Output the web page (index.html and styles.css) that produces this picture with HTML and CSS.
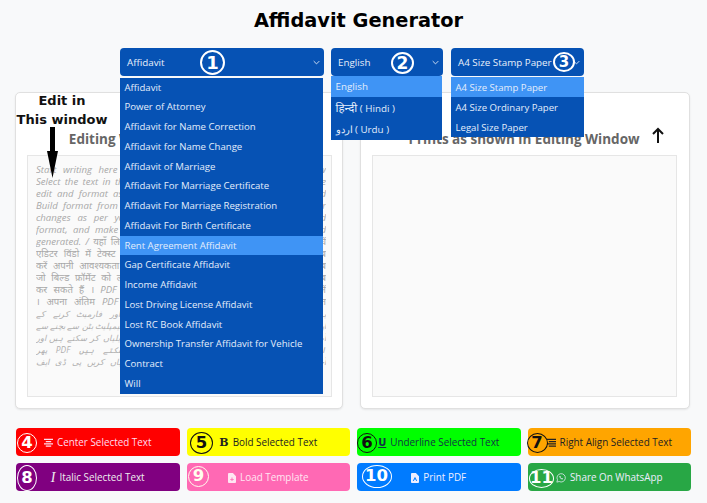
FILE: index.html
```html
<!DOCTYPE html>
<html lang="en">
<head>
<meta charset="utf-8">
<title>Affidavit Generator</title>
<link rel="stylesheet" href="styles.css">
</head>
<body>
<div class="page">
  <h1 class="title">Affidavit Generator</h1>
  <div class="selects">
    <div class="select s1">
      <div class="select-head"><span>Affidavit</span><svg class="chev" viewBox="0 0 10 6"><path d="M1 1l4 4 4-4"/></svg></div>
      <span class="num n1">1</span>
      <ul class="menu">
        <li>Affidavit</li><li>Power of Attorney</li><li>Affidavit for Name Correction</li><li>Affidavit for Name Change</li><li>Affidavit of Marriage</li><li>Affidavit For Marriage Certificate</li><li>Affidavit For Marriage Registration</li><li>Affidavit For Birth Certificate</li><li class="on">Rent Agreement Affidavit</li><li>Gap Certificate Affidavit</li><li>Income Affidavit</li><li>Lost Driving License Affidavit</li><li>Lost RC Book Affidavit</li><li>Ownership Transfer Affidavit for Vehicle</li><li>Contract</li><li>Will</li>
      </ul>
    </div>
    <div class="select s2">
      <div class="select-head"><span>English</span><svg class="chev" viewBox="0 0 10 6"><path d="M1 1l4 4 4-4"/></svg></div>
      <span class="num n2">2</span>
      <ul class="menu tall">
        <li class="on">English</li><li><span class="hi">हिन्दी</span> ( Hindi )</li><li>اردو ( Urdu )</li>
      </ul>
    </div>
    <div class="select s3">
      <div class="select-head"><span>A4 Size Stamp Paper</span><svg class="chev" viewBox="0 0 10 6"><path d="M1 1l4 4 4-4"/></svg></div>
      <span class="num n3">3</span>
      <ul class="menu">
        <li class="on">A4 Size Stamp Paper</li><li>A4 Size Ordinary Paper</li><li>Legal Size Paper</li>
      </ul>
    </div>
  </div>
  <div class="cards">
    <section class="card left">
      <h2 class="card-title">Editing Window to Edit Your Text</h2>
      <div class="box editor">
        <p class="line">Start writing here and format your own legal document now</p>
        <p class="line">Select the text in this editing window then you can easily change</p>
        <p class="line">edit and format as you like using the buttons given below and</p>
        <p class="line">Build format from the available templates and then make your</p>
        <p class="line">changes as per your need so that it looks like the required</p>
        <p class="line">format, and make the final PDF document that will be printed</p>
        <p class="line">generated. / यहाँ लिखना शुरू करें और विंडो में अपना टेक्स्ट बनाएं और जांचें</p>
        <p class="line">एडिटर विंडो में टेक्स्ट चुनें और फ़ॉर्मेट बटन से संपादित करें और सहेजें तब</p>
        <p class="line">करें अपनी आवश्यकता अनुसार बदलाव फ़ॉर्मेट और टेम्पलेट को लोड करें तब</p>
        <p class="line">जो बिल्ड फ़ॉर्मेट को लोड करके अपने अनुसार बदलाव जल्दी से कर लें अब</p>
        <p class="line">कर सकते हैं । PDF जेनरेट करें और प्रिंट करके दस्तावेज़ सहेजें और भेजें</p>
        <p class="line">। अपना अंतिम PDF जेनरेट करें और व्हाट्सएप पर साझा करें अब तुरंत</p>
        <p class="line urdu" dir="rtl">یہاں لکھنا شروع کریں متن منتخب کریں ترمیم اور فارمیٹ کرنے کے</p>
        <p class="line urdu" dir="rtl">اپنی مرضی کے مطابق فارمیٹ بنائیں اور بٹن استعمال کریں ٹیمپلیٹ بٹن سے بچنے سے</p>
        <p class="line urdu" dir="rtl">آپ اپنی ضرورت کے مطابق دستاویز میں ہر طرح کی تبدیلیاں کر سکتے ہیں اور</p>
        <p class="line urdu" dir="rtl">اپنی دستاویز میں مطلوبہ تبدیلیاں کر سکتے ہیں PDF پھر</p>
        <p class="line urdu" dir="rtl">آخر میں اپنی حتمی دستاویز محفوظ کریں PDF تبدیلیاں کریں پی ڈی ایف</p>
      </div>
    </section>
    <section class="card right">
      <h2 class="card-title">Prints as shown in Editing Window</h2>
      <div class="box"></div>
    </section>
    <div class="note">Edit in<br>This window</div>
    <svg class="arrow-down" viewBox="0 0 11 51"><path d="M3 0h5v24h3L5.500 51 0 24h3z"/></svg>
    <svg class="arrow-up" viewBox="0 0 12 16"><path d="M6 16V2M1 7l5-5 5 5"/></svg>
  </div>
  <div class="buttons">
    <button class="btn red"><span class="num small bn4">4</span><svg class="ic" viewBox="0 0 10 10"><path d="M0 1.500h10M2 4h6M0 6.500h10M2 9h6"/></svg>Center Selected Text</button>
    <button class="btn yellow"><span class="num small dark bn5">5</span><b class="bi">B</b>Bold Selected Text</button>
    <button class="btn green"><span class="num small dark bn6">6</span><span class="ui">U</span>Underline Selected Text</button>
    <button class="btn orange"><span class="num small dark bn7">7</span><svg class="ic" viewBox="0 0 10 10"><path d="M0 1.500h10M2 4h8M0 6.500h10M2 9h8"/></svg>Right Align Selected Text</button>
    <button class="btn purple"><span class="num small bn8">8</span><i class="ii">I</i>Italic Selected Text</button>
    <button class="btn pink"><span class="num small bn9">9</span><svg class="ic file" viewBox="0 0 9 11"><path fill-rule="evenodd" d="M1 0h4.500L9 3.500V10a1 1 0 0 1-1 1H1a1 1 0 0 1-1-1V1a1 1 0 0 1 1-1zM4 5v1.500H2.500v1H4V9h1V7.500h1.500v-1H5V5z"/></svg>Load Template</button>
    <button class="btn blue"><span class="num small bn10">10</span><svg class="ic file" viewBox="0 0 9 11"><path fill-rule="evenodd" d="M1 0h4.500L9 3.500V10a1 1 0 0 1-1 1H1a1 1 0 0 1-1-1V1a1 1 0 0 1 1-1zM4.500 4L2 9h1l1.500-2.500L6 9h1z"/></svg>Print PDF</button>
    <button class="btn wa"><span class="num small bn11">11</span><svg class="ic wa-ic" viewBox="0 0 12 12"><path d="M1 11l.8-2.800A5 5 0 1 1 3.800 10.200z"/><path class="wa-fill" d="M4.200 3.500c-.5.800.3 2.200 1.300 3.100s2 1.300 2.500.9l.3-.8-1.100-.6-.5.400c-.6-.2-1.100-.8-1.400-1.400l.4-.5-.5-1.100z"/></svg>Share On WhatsApp</button>
  </div>
</div>
</body>
</html>
```
FILE: styles.css
```css
* { box-sizing: border-box; }
html, body { margin: 0; padding: 0; }
body { background: #f8f9fa; font-family: "Open Sans", "Noto Sans", sans-serif; width: 707px; height: 503px; overflow: hidden; }
.page { padding: 10px 16px 0 15px; position: relative; }
.title { margin: 0; height: 38px; text-align: center; font: bold 19.350px/22px "DejaVu Sans", sans-serif; color: #000; padding-left: 11px; }
.selects { display: flex; margin-left: 105px; gap: 7px; height: 44px; position: relative; z-index: 3; }
.select { position: relative; height: 28px; }
.s1 { width: 204px; }
.s2 { width: 112px; }
.s3 { width: 133px; margin-left: 1px; }
.select-head { height: 28px; background: #0652b4; color: #e8f0fb; border-radius: 4px; display: flex; align-items: center; justify-content: space-between; padding: 0 4px 0 7px; font-size: 9.800px; }
.chev { width: 7px; height: 5px; fill: none; stroke: #dfe9f7; stroke-width: 1.300; }
.menu { list-style: none; margin: 0; padding: 0; position: absolute; left: 0; top: 29px; background: #0652b4; color: #e3edfb; font-size: 9.600px; width: 100%; }
.s1 .menu { width: 203px; top: 29.500px; }
.s2 .menu { width: 111px; top: 28px; }
.s3 .menu { top: 28.500px; }
.menu li { height: 19.780px; line-height: 19.780px; padding-left: 4.500px; white-space: nowrap; }
.s3 .menu li { padding-top: 1px; height: 20px; line-height: 19px; }
.menu.tall li { height: 21.300px; line-height: 21.300px; font-size: 9.800px; }
.hi { font-size: 11.500px; }
.menu li.on { background: #3f94f5; }
.num { position: absolute; display: flex; align-items: center; justify-content: center; border-radius: 50%; border: 2px solid #fff; color: #fff; font: bold 18px/1 "DejaVu Sans", sans-serif; }
.num.small { font-size: 16.500px; border-width: 1.800px; }
.num.dark { border-color: #111; color: #111; }
.n1 { left: 80px; top: 2px; width: 25px; height: 25px; }
.n2 { left: 60px; top: 4px; width: 23px; height: 22px; font-size: 17px; }
.n3 { left: 102px; top: 4px; width: 22px; height: 20px; font-size: 15px; }
.cards { display: flex; gap: 17px; position: relative; height: 317px; margin-bottom: 19px; }
.card { background: #fff; border: 1px solid #e0e0e0; border-radius: 5px; padding: 0 11px; height: 317px; display: flex; flex-direction: column; box-shadow: 0 1px 2px rgba(0, 0, 0, .08); }
.left { width: 328px; }
.right { width: 330px; }
.card-title { margin: 0; height: 62px; padding-top: 36px; font-size: 13.500px; line-height: 20px; font-weight: 700; color: #666; text-align: center; white-space: nowrap; }
.right .card-title { padding-right: 2px; }
.box { height: 242px; width: 305px; background: #fafafa; border: 1px solid #e6e6e6; }
.editor { padding: 8px 5px 0 8px; color: #a8a8a8; font-size: 9.600px; line-height: 12px; font-style: italic; overflow: hidden; }
.line { margin: 0; height: 12px; overflow: hidden; text-align: justify; text-align-last: justify; }
.urdu { font-size: 8.400px; color: #b0b0b0; }
.note { position: absolute; left: 1px; top: -1px; width: 92px; text-align: center; font: bold 13px/19px "DejaVu Sans", sans-serif; color: #111; white-space: nowrap; }
.arrow-down { position: absolute; left: 31.500px; top: 35px; width: 11px; height: 51px; fill: #000; }
.arrow-up { position: absolute; left: 637px; top: 35px; width: 12px; height: 16px; fill: none; stroke: #111; stroke-width: 2; }
.buttons { display: grid; grid-template-columns: repeat(4, 163.500px); gap: 7px; padding-left: 1px; }
.btn { position: relative; height: 28px; border: 0; border-radius: 4px; padding: 1px 0 0; display: flex; align-items: center; justify-content: center; gap: 4px; font: 400 9.900px/1 "Open Sans", sans-serif; color: #fff; white-space: nowrap; }
.red { background: #f00; color: #fde; }
.yellow { background: #ff0; color: #222; }
.green { background: #0f0; color: #134; }
.orange { background: #ffa500; color: #222; }
.purple { background: #800080; color: #eee; }
.pink { background: #ff69b4; color: #ffe6f2; }
.blue { background: #007bff; color: #eef; }
.wa { background: #28a745; color: #eef; }
.ic { width: 9px; height: 9px; fill: none; stroke: currentColor; stroke-width: 1.300; flex: none; }
.ic.file { fill: currentColor; stroke: none; width: 8px; height: 10px; }
.ic.wa-ic { width: 10px; height: 10px; stroke-width: .9; }
.wa-fill { fill: currentColor; stroke: none; }
.bi { font: bold 11px "DejaVu Serif", serif; }
.ui { font: bold 10px "DejaVu Sans", sans-serif; text-decoration: underline; }
.ii { font: italic 400 14px "Liberation Serif", serif; }
.bn4 { left: 1px; top: 5px; width: 20px; height: 20px; }
.bn5 { left: 3.500px; top: 4px; width: 23px; height: 22px; }
.bn6 { left: 0; top: 5px; width: 20px; height: 20px; }
.bn7 { left: -1px; top: 5px; width: 21px; height: 20px; }
.bn8 { left: 1px; top: 2px; width: 20px; height: 26px; }
.bn9 { left: 1.500px; top: 3px; width: 21px; height: 21px; border-color: #ffe; color: #ffe; }
.bn10 { left: 4.500px; top: 2px; width: 30px; height: 23px; }
.bn11 { left: 1.500px; top: 6px; width: 25px; height: 19px; }
```
